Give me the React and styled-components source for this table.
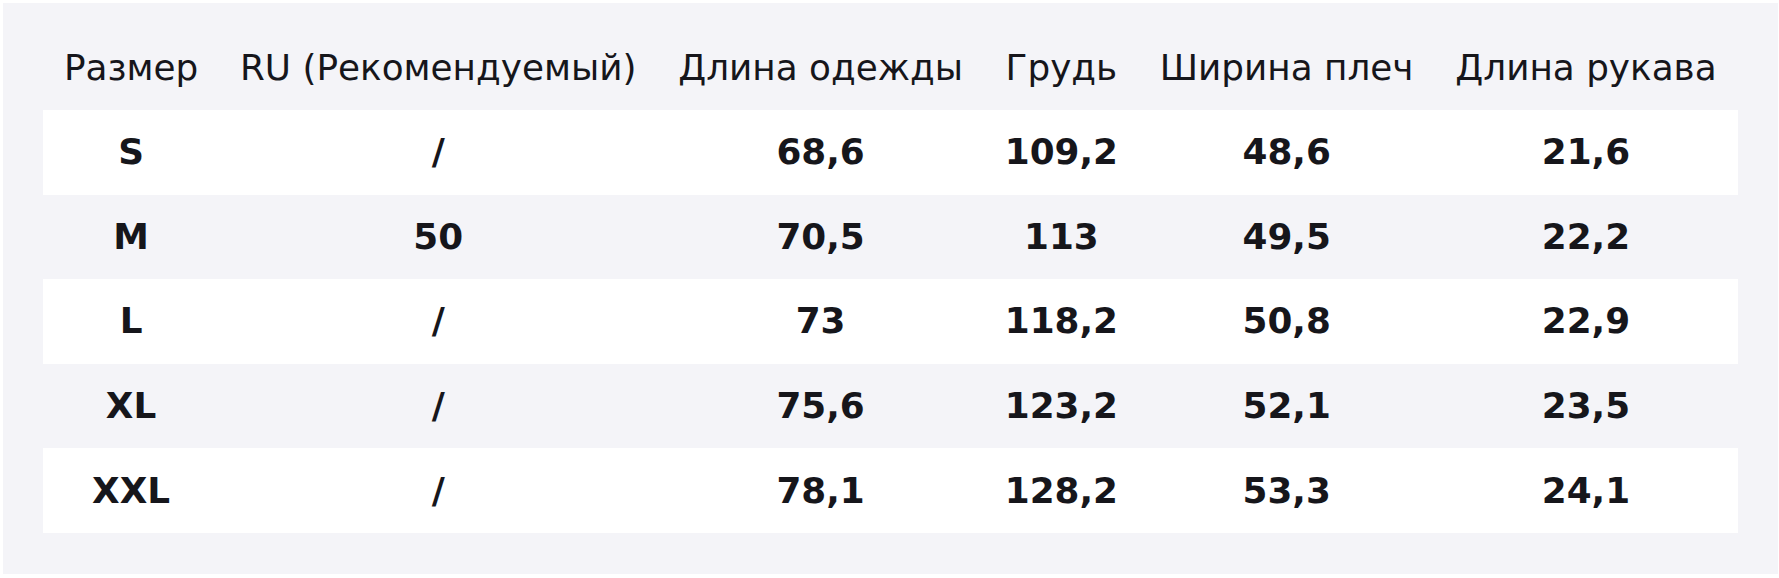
import React from "react";
import styled, { createGlobalStyle } from "styled-components";

const Global = createGlobalStyle`
  html, body { margin: 0; padding: 0; background: #ffffff; }
  body { font-family: "DejaVu Sans", "Noto Sans", sans-serif; color: #16161b; }
`;

const Page = styled.div`
  padding: 3px;
`;

const Panel = styled.div`
  display: inline-block;
  background: #f4f4f8;
  padding: 40px 40px 41px;
`;

const Table = styled.table`
  border-collapse: collapse;
  border-spacing: 0;
  font-size: 35.8px;
`;

const HeadCell = styled.th`
  font-weight: 400;
  text-align: center;
  white-space: nowrap;
  padding: 4px 20.9px 21px;
  height: 42px;
  line-height: 42px;
  vertical-align: top;
  color: #16161b;
`;

const Row = styled.tr`
  background: ${(p) => (p.$striped ? "#ffffff" : "transparent")};
`;

const Cell = styled.td`
  font-weight: 700;
  text-align: center;
  white-space: nowrap;
  padding: 0 20.9px;
  height: 84.6px;
  line-height: 42px;
  vertical-align: middle;
  color: #16161b;
`;

const headers = [
  "Размер",
  "RU (Рекомендуемый)",
  "Длина одежды",
  "Грудь",
  "Ширина плеч",
  "Длина рукава",
];

const rows = [
  ["S", "/", "68,6", "109,2", "48,6", "21,6"],
  ["M", "50", "70,5", "113", "49,5", "22,2"],
  ["L", "/", "73", "118,2", "50,8", "22,9"],
  ["XL", "/", "75,6", "123,2", "52,1", "23,5"],
  ["XXL", "/", "78,1", "128,2", "53,3", "24,1"],
];

export default function App() {
  return (
    <Page>
      <Global />
      <Panel>
        <Table>
          <thead>
            <tr>
              {headers.map((h) => (
                <HeadCell key={h}>{h}</HeadCell>
              ))}
            </tr>
          </thead>
          <tbody>
            {rows.map((r, i) => (
              <Row key={r[0]} $striped={i % 2 === 0}>
                {r.map((c, j) => (
                  <Cell key={j}>{c}</Cell>
                ))}
              </Row>
            ))}
          </tbody>
        </Table>
      </Panel>
    </Page>
  );
}
